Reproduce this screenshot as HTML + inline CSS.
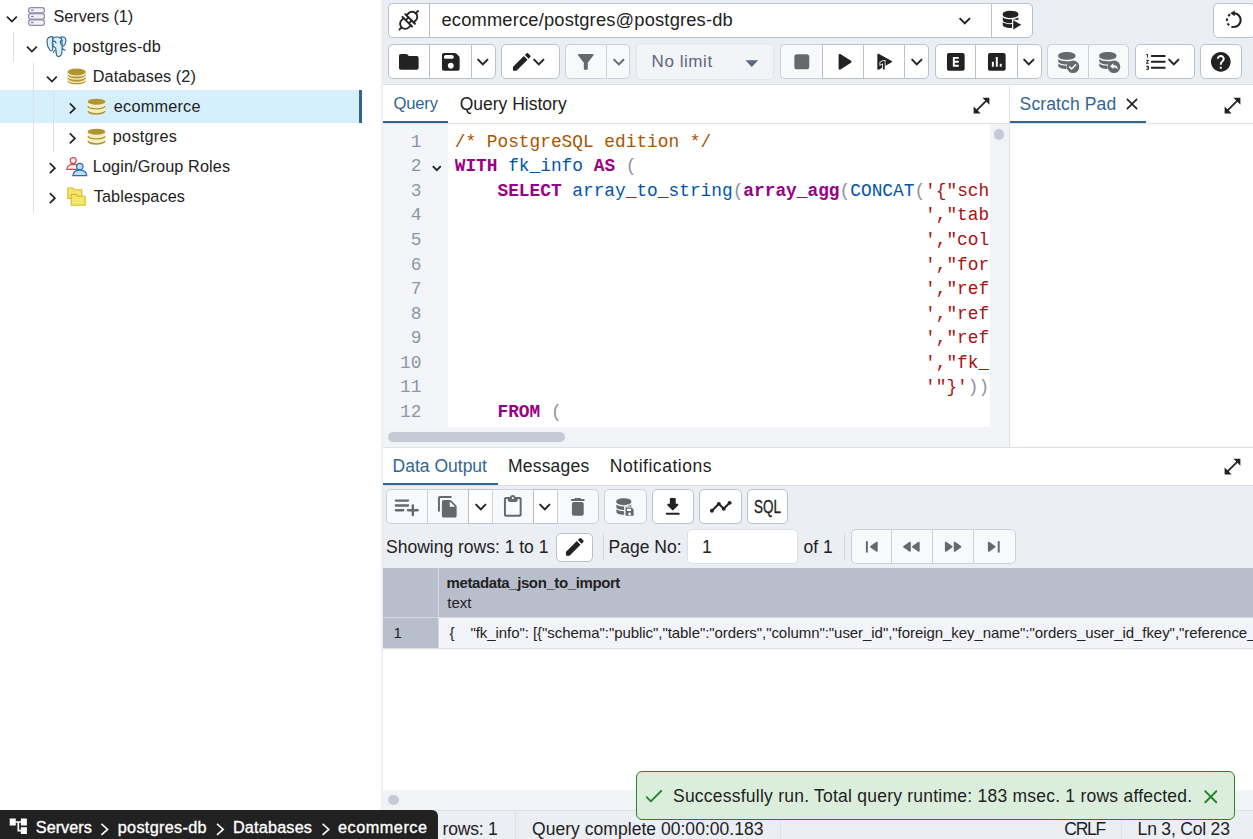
<!DOCTYPE html>
<html lang="en">
<head>
<meta charset="utf-8">
<title>pgAdmin 4</title>
<style>
*{box-sizing:border-box;margin:0;padding:0}
html,body{width:1253px;height:839px;overflow:hidden;background:#fff}
body{position:relative;font-family:"Liberation Sans",sans-serif;font-size:16.25px;color:#222;line-height:20px}
.abs{position:absolute}
.t{position:absolute;white-space:nowrap;line-height:20px;height:20px}
svg{position:absolute;display:block;overflow:visible}
/* tree */
#tree{position:absolute;left:0;top:0;width:382px;height:839px;background:#fff}
#sel{position:absolute;left:0;top:90px;width:362px;height:33px;background:#d6effc;border-right:3px solid #326690}
.guide{position:absolute;width:1px;background:#dde0e6}
.chev{stroke:#222;stroke-width:1.7;fill:none}
/* panels */
#split{position:absolute;left:380px;top:0;width:3px;height:839px;background:linear-gradient(to right,#fff,#e6e9ef)}
#tb{position:absolute;left:383px;top:0;width:870px;height:85px;background:#ebeef3;border-bottom:1px solid #dde0e6}
.b{position:absolute;height:35px;background:#fff;border:1px solid #bac1cd;top:44px}
.b.r1{top:3px}
.b svg{fill:#222;width:23.6px;height:23.6px;top:5.2px}
.b.dis{opacity:.65}
.gl{border-radius:5px 0 0 5px;border-right:none}
.gm{border-radius:0;border-right:none}
.gr{border-radius:0 5px 5px 0}
.gs{border-radius:5px}
.tabbar{position:absolute;height:39px;background:#fff;border-bottom:1px solid #dde0e6}
.tab{position:absolute;top:0;height:39px;border-bottom:3px solid transparent}
.tab.act{border-bottom-color:#326690;color:#326690}

.tabbar .ul{position:absolute;bottom:0;height:2px;background:#326690}
.tt{font-size:17.5px}
.tt.act{color:#326690}
svg.ico{fill:#222}
#ed{position:absolute;left:383px;top:124px;width:626px;height:323px;background:#fff;overflow:hidden}
#gut{position:absolute;left:0;top:0;width:65px;height:303px;background:#f3f5f9}
#ln,#code{position:absolute;top:5.700px;font-family:"Liberation Mono",monospace;font-size:17.82px;line-height:24.56px;white-space:pre;margin:0}
#ln{left:0;width:38.500px;text-align:right;color:#8d95a8}
#code{left:71.700px;width:534.800px;height:298px;overflow:hidden;color:#222}
#code b{color:#908;font-weight:bold}
#code i{color:#05a;font-style:normal}
#code u{color:#8d929d;text-decoration:none}
#code s{color:#a11;text-decoration:none}
#code .c{color:#a50}
#vsb{position:absolute;left:606.700px;top:0;width:19.300px;height:303px;background:#f1f3f7}
#hsb{position:absolute;left:0;top:303px;width:626px;height:20px;background:#f1f3f7}
.dot{position:absolute;width:10.500px;height:10.500px;border-radius:50%;background:#c5cad6}
.thumb{position:absolute;height:10px;border-radius:5px;background:#c5cad6}
#rtb{position:absolute;left:383px;top:486px;width:870px;height:82px;background:#ebeef3}
#rtb .b{top:4px}
#grid{position:absolute;left:383px;top:567.500px;width:870px;height:90px;overflow:hidden}
#status{position:absolute;left:383px;top:810px;width:870px;height:29px;background:#ebeef3;border-top:1px solid #dde0e6}
#crumb{position:absolute;left:0;top:810px;width:437.700px;height:29px;background:#212121;border-radius:0 6px 0 0;color:#fff}
.cb{top:6.600px;font-size:16.250px;color:#fff;-webkit-text-stroke:.35px #fff}
#toast{position:absolute;left:636px;top:771px;width:599px;height:48.500px;background:#dbeedb;border:1px solid #26852b;border-radius:6px}
</style>
</head>
<body>
<!-- ================= TREE ================= -->
<div id="tree">
  <div id="sel"></div>
  <div class="guide" style="left:13px;top:32px;height:30px"></div>
  <div class="guide" style="left:33px;top:62px;height:150px"></div>
  <div class="guide" style="left:53px;top:92px;height:60px"></div>
  <!-- chevrons -->
  <svg style="left:0;top:0" width="382" height="220" viewBox="0 0 382 220">
    <g class="chev">
      <path d="M7 16.6 L11.9 21.5 L16.8 16.6"/>
      <path d="M27 46.7 L31.9 51.6 L36.8 46.7"/>
      <path d="M47 76.7 L51.9 81.6 L56.8 76.7"/>
      <path d="M69.8 103.4 L74.9 108.4 L69.8 113.4"/>
      <path d="M69.8 133.4 L74.9 138.4 L69.8 143.4"/>
      <path d="M49.8 163.2 L54.9 168.2 L49.8 173.2"/>
      <path d="M49.8 193.2 L54.9 198.2 L49.8 203.2"/>
    </g>
    <!-- servers icon -->
    <g fill="#f1f1f6" stroke="#918eae" stroke-width="1.250">
      <rect x="28.6" y="7.5" width="15.8" height="5.4" rx="2.2"/>
      <rect x="28.6" y="13.7" width="15.8" height="5.4" rx="2.2"/>
      <rect x="28.6" y="19.9" width="15.8" height="5.4" rx="2.2"/>
    </g>
    <g stroke="#6f6c8e" stroke-width="1"><path d="M31 10.2h2.6M31 16.4h2.6M31 22.6h2.6"/></g>
    <!-- elephant -->
    <g transform="translate(42,32)" fill="#ddf0fb" stroke="#2d6594" stroke-width="1.150" stroke-linejoin="round" stroke-linecap="round">
      <path d="M11 5C8.500 4 5.300 5.500 5 8.700c-.1 3.300 1.300 7.300 2.700 9.300 1 1.300 2.600 1 3.100-.7-.6-4.300-.6-8.300.2-12.300z"/>
      <path d="M18.500 5.300c2.500-1.300 5.500.2 5.400 3.200-.2 3-1.400 5-2.900 5.800-1.500.2-2.700-1.300-2.700-3.300z"/>
      <path d="M11.200 6c1.800-1.400 6.300-1.400 8.100.5.900 1.500.9 3.500.7 5.500.3 3.300.2 6.700-.3 9.700-.3 1.200-.9 2-1.700 2.300-.7.600-1.500.6-2 .5-1.100-.4-1.600-1.400-1.700-2.500-.2-1.300-.2-2.700-.3-4-.1-.9-.3-1.700-.7-2.300-1.300-.5-2-1.400-2.300-2.400-.4-2-.4-5 .200-7.300z"/>
      <path d="M20.300 8.300c-1-.4-1.900.5-2 2 .0 1.500.7 2.500 1.700 2.700M11.200 9.300c1.300-.3 2.500.3 2.900 1.700M13.200 18l-1.800 2.400M20.500 16.700l2.300 1.600" fill="none"/>
    </g>
    <!-- db icons -->
    <g transform="translate(67.700,68.600)">
      <path d="M0 3v9.700a8.900 3 0 0 0 17.800 0V3z" fill="#b29431"/>
      <ellipse cx="8.900" cy="3" rx="8.900" ry="3" fill="#b29431"/>
      <g fill="none" stroke="#f6efc6" stroke-width="1.300"><path d="M.2 4.300a8.700 3 0 0 0 17.400 0"/><path d="M.2 7.500a8.700 3 0 0 0 17.400 0"/><path d="M.2 10.700a8.700 3 0 0 0 17.400 0"/></g>
    </g>
    <g transform="translate(87.700,98.700)">
      <path d="M0 3v9.700a8.800 3 0 0 0 17.600 0V3z" fill="#f6efc6"/>
      <g fill="none" stroke="#b29431"><path d="M.5 12.300a8.300 2.900 0 0 0 16.600 0" stroke-width="1.500"/><path d="M.3 7.300a8.500 2.900 0 0 0 17 0" stroke-width="1.100"/></g>
      <ellipse cx="8.800" cy="3" rx="8.800" ry="3" fill="#b29431"/>
    </g>
    <g transform="translate(87.700,128.700)">
      <path d="M0 3v9.700a8.800 3 0 0 0 17.600 0V3z" fill="#f6efc6"/>
      <g fill="none" stroke="#b29431"><path d="M.5 12.300a8.300 2.900 0 0 0 16.600 0" stroke-width="1.500"/><path d="M.3 7.300a8.500 2.900 0 0 0 17 0" stroke-width="1.100"/></g>
      <ellipse cx="8.800" cy="3" rx="8.800" ry="3" fill="#b29431"/>
    </g>
    
    <!-- roles -->
    <g stroke-width="1.200" stroke-linejoin="round">
      <g fill="#fdecec" stroke="#cc4d55"><circle cx="73.200" cy="160.600" r="3"/><path d="M66.800 169.400c.4-3.400 3-5 6.400-5s6 1.600 6.400 5z"/></g>
      <g fill="#bcdef3" stroke="#2d69c2"><circle cx="79.800" cy="166.600" r="3.200"/><path d="M72.800 175.600c.4-3.600 3.200-5.400 7-5.400s6.600 1.800 7 5.400z"/></g>
    </g>
    <!-- tablespaces -->
    <g fill="#f4e66a" stroke="#d9b928" stroke-width="1.100" stroke-linejoin="round">
      <path d="M67.800 188h4.600q1.400 0 1.600 1.800h7.800v8.600H67.800z"/>
      <path d="M71.200 194.400h4.400q1.400 0 1.600 1.800h8v9H71.200z"/>
    </g>
  </svg>
  <div class="t" style="left:53.6px;top:6px;letter-spacing:-0.080px">Servers (1)</div>
  <div class="t" style="left:72.8px;top:36px;letter-spacing:0.220px">postgres-db</div>
  <div class="t" style="left:92.8px;top:66px;letter-spacing:0.083px">Databases (2)</div>
  <div class="t" style="left:113.8px;top:96px;letter-spacing:0.225px">ecommerce</div>
  <div class="t" style="left:112.8px;top:126px;letter-spacing:0.257px">postgres</div>
  <div class="t" style="left:92.8px;top:156px;letter-spacing:0.113px">Login/Group Roles</div>
  <div class="t" style="left:93.8px;top:186px;letter-spacing:0.080px">Tablespaces</div>
  <!--TREE-ROWS-END-->
</div>
<div id="split"></div>
<!-- ================= TOOLBAR ================= -->
<div id="tb">
<!--TOOLBAR-->
<div class="b gl" style="left:5.0px;top:3.0px;width:41.0px;height:35.0px"><svg viewBox="0 0 24 24" style="left:7.7px"><g transform="translate(11.900,11.500) rotate(-45)" fill="none" stroke="#222" stroke-width="1.900" stroke-linecap="round"><path d="M-2-7V7M2-7V7"/><path d="M-2-5.200H-5A5.200 5.200 0 0 0-5 5.200H-2M2-5.200H5A5.200 5.200 0 0 1 5 5.200H2"/><path d="M-10.200 0H-13.400M10.200 0H13.400M-2-2.300H2M-2 2.300H2"/></g></svg></div>
<div class="b gm" style="left:46.0px;top:3px;width:562.0px;height:35px"><div class="t" style="left:11.5px;top:5.6px;font-size:18.3px;letter-spacing:0.188px">ecommerce/postgres@postgres-db</div><svg viewBox="0 0 24 24" style="left:523.3px"><path d="M7.41 8.59L12 13.17l4.59-4.58L18 10l-6 6-6-6 1.410-1.410z"/></svg></div>
<div class="b gr" style="left:608.0px;top:3.0px;width:42.0px;height:35.0px"><svg viewBox="0 0 24 24" style="left:7.8px"><g transform="translate(12,10.900) scale(.92) translate(-12,-12)"><path d="M2 5.300C2 3.500 5.900 2 10.600 2s8.600 1.500 8.600 3.300v1.400c0 1.800-3.900 3.300-8.600 3.300S2 8.500 2 6.700z"/><path d="M2 9.200c1.500 1.500 4.900 2.300 8.600 2.300s7.100-.8 8.600-2.300v3.200l-7-1v4.300c-.5.050-1 .07-1.600.07C5.900 15.770 2 14.300 2 12.500zM2 14.600c1.500 1.500 4.900 2.300 8.600 2.300.6 0 1.100 0 1.600-.07v4.300c-.5.050-1 .07-1.600.07C5.900 21.200 2 19.700 2 17.900z"/><path d="M13.600 12.700l9 5-9 5z"/></g></svg></div>
<div class="b gs" style="left:830.0px;top:3.0px;width:42.0px;height:35.0px"><svg viewBox="0 0 24 24" style="left:7.9px"><g fill="none" stroke="#222" stroke-width="2.100"><path d="M12 4.400a7 7 0 1 1 0 14"/><path d="M12 18.400a7 7 0 0 1-7-7c0-3 1.900-5.600 4.600-6.600" stroke-dasharray="2.500 2.600"/></g><path d="M13 1.400v6L8.400 4.400z"/></svg></div>
<div class="b gl" style="left:5.0px;top:44.0px;width:41.0px;height:35.0px"><svg viewBox="0 0 24 24" style="left:7.7px"><path d="M10.59 4.59C10.21 4.21 9.7 4 9.17 4H4c-1.1 0-1.99.9-1.99 2L2 18c0 1.1.9 2 2 2h16c1.1 0 2-.9 2-2V8c0-1.1-.9-2-2-2h-8l-1.41-1.41z"/></svg></div>
<div class="b gm" style="left:46.0px;top:44.0px;width:42.0px;height:35.0px"><svg viewBox="0 0 24 24" style="left:8.6px"><path d="M17.59 3.59c-.38-.38-.89-.59-1.42-.59H5c-1.11 0-2 .9-2 2v14c0 1.1.9 2 2 2h14c1.1 0 2-.9 2-2V7.830c0-.53-.21-1.040-.59-1.410l-2.820-2.830zM12 19c-1.660 0-3-1.340-3-3s1.340-3 3-3 3 1.340 3 3-1.340 3-3 3zm1-10H7c-1.100 0-2-.9-2-2s.9-2 2-2h6c1.100 0 2 .9 2 2s-.9 2-2 2z"/></svg></div>
<div class="b gr" style="left:88.0px;top:44.0px;width:25.0px;height:35.0px"><svg viewBox="0 0 24 24" style="left:-1.3px"><path d="M7.41 8.59L12 13.17l4.59-4.58L18 10l-6 6-6-6 1.410-1.410z"/></svg></div>
<div class="b gs" style="left:118.0px;top:44.0px;width:59.0px;height:35.0px"><svg viewBox="0 0 24 24" style="left:7.9px"><path d="M3 17.460v3.040c0 .28.22.5.5.5h3.040c.13 0 .26-.05.35-.15L17.810 9.940l-3.750-3.750L3.150 17.100c-.1.1-.15.22-.15.360zM20.710 7.040c.39-.39.39-1.020 0-1.410l-2.340-2.340c-.39-.39-1.020-.39-1.410 0l-1.830 1.830 3.750 3.750 1.830-1.830z"/></svg><svg viewBox="0 0 24 24" style="left:25.0px"><path d="M7.41 8.59L12 13.17l4.59-4.58L18 10l-6 6-6-6 1.410-1.410z"/></svg></div>
<div class="b gl dis" style="left:182.0px;top:44.0px;width:41.0px;height:35.0px"><svg viewBox="0 0 24 24" style="left:7.9px"><path d="M4.250 5.610C6.270 8.200 10 13 10 13v6c0 .55.45 1 1 1h2c.55 0 1-.45 1-1v-6s3.720-4.800 5.740-7.390c.51-.66.04-1.610-.79-1.610H5.040c-.83 0-1.300.95-.79 1.610z"/></svg></div>
<div class="b gr dis" style="left:223.0px;top:44.0px;width:24.0px;height:35.0px"><svg viewBox="0 0 24 24" style="left:-0.5px"><path d="M7.41 8.59L12 13.17l4.59-4.58L18 10l-6 6-6-6 1.410-1.410z"/></svg></div>
<div class="b gs" style="left:253.0px;top:43px;width:138.0px;height:37px;background:#f3f4f8;border-color:#e1e4eb"><div class="t" style="left:14.6px;top:8px;font-size:17px;color:#5d6682;letter-spacing:0.550px">No limit</div><svg viewBox="0 0 24 24" style="left:103.1px;top:6.700px;fill:#5d6682"><path d="M5.500 9.300l6.500 7 6.500-7z"/></svg></div>
<div class="b gl dis" style="left:397.0px;top:44.0px;width:42.0px;height:35.0px"><svg viewBox="0 0 24 24" style="left:8.8px"><rect x="4.400" y="4.400" width="15.200" height="15.200" rx="2.600"/></svg></div>
<div class="b gm" style="left:439.0px;top:44.0px;width:41.0px;height:35.0px"><svg viewBox="0 0 24 24" style="left:9.6px"><path d="M5.700 5.100v13.800c0 .9 1 1.450 1.760.96l10.840-6.900c.7-.45.7-1.470 0-1.920L7.460 4.140C6.700 3.650 5.700 4.200 5.700 5.100z"/></svg></div>
<div class="b gm" style="left:480.0px;top:44.0px;width:41.0px;height:35.0px"><svg viewBox="0 0 24 24" style="left:9.7px"><path d="M3.400 4.600V19.300c0 .7.7 1.100 1.300.7L18 12.500c.5-.3.5-1 0-1.300L4.700 3.900c-.6-.4-1.300 0-1.300.7z"/><path d="M10.900 11V19.900H9.100V13.600L6.400 14.900V12.700L9.500 11z" fill="#222" stroke="#fff" stroke-width="1.600" paint-order="stroke"/></svg></div>
<div class="b gr" style="left:521.0px;top:44.0px;width:25.0px;height:35.0px"><svg viewBox="0 0 24 24" style="left:-0.2px"><path d="M7.41 8.59L12 13.17l4.59-4.58L18 10l-6 6-6-6 1.410-1.410z"/></svg></div>
<div class="b gl" style="left:552.0px;top:44.0px;width:40.0px;height:35.0px"><svg viewBox="0 0 24 24" style="left:7.6px"><path d="M19 3H5c-1.100 0-2 .9-2 2v14c0 1.100.9 2 2 2h14c1.100 0 2-.9 2-2V5c0-1.100-.9-2-2-2zm-4 6h-4v2h4v2h-4v2h4v2H9V7h6v2z"/></svg></div>
<div class="b gm" style="left:592.0px;top:44.0px;width:42.0px;height:35.0px"><svg viewBox="0 0 24 24" style="left:8.7px"><path d="M19 3H5c-1.100 0-2 .9-2 2v14c0 1.100.9 2 2 2h14c1.100 0 2-.9 2-2V5c0-1.100-.9-2-2-2zM9 17H7v-5h2v5zm4 0h-2V7h2v10zm4 0h-2v-3h2v3z"/></svg></div>
<div class="b gr" style="left:634.0px;top:44.0px;width:25.0px;height:35.0px"><svg viewBox="0 0 24 24" style="left:-1.3px"><path d="M7.41 8.59L12 13.17l4.59-4.58L18 10l-6 6-6-6 1.410-1.410z"/></svg></div>
<div class="b gl dis" style="left:664.0px;top:44.0px;width:41.0px;height:35.0px"><svg viewBox="0 0 24 24" style="left:8.1px"><path d="M2.300 5.300C2.300 3.500 6.200 2 11 2s8.700 1.500 8.700 3.300v1.400C19.700 8.500 15.800 10 11 10S2.300 8.500 2.300 6.700z"/><path d="M2.300 9.200c1.500 1.500 4.900 2.300 8.700 2.300 1.300 0 2.600-.1 3.700-.3-1.400.8-2.500 2-3.100 3.500H11c-4.800 0-8.700-1.500-8.700-3.300zM2.300 13.700c1.500 1.500 4.900 2.300 8.500 2.300-.2.900-.2 2.100 0 3.200-4.700-.05-8.500-1.500-8.500-3.300z"/><path d="M17.300 10.600a6.400 6.400 0 1 0 0 12.800 6.400 6.400 0 0 0 0-12.800zm-1.400 9.700l-3-3 1.100-1.100 1.900 1.900 4-4 1.100 1.100z"/></svg></div>
<div class="b gr dis" style="left:705.0px;top:44.0px;width:41.0px;height:35.0px"><svg viewBox="0 0 24 24" style="left:8.1px"><path d="M2.300 5.300C2.300 3.500 6.200 2 11 2s8.700 1.500 8.700 3.300v1.400C19.700 8.500 15.800 10 11 10S2.300 8.500 2.300 6.700z"/><path d="M2.300 9.200c1.500 1.500 4.900 2.300 8.700 2.300 1.300 0 2.600-.1 3.700-.3-1.400.8-2.500 2-3.100 3.500H11c-4.800 0-8.700-1.500-8.700-3.300zM2.300 13.700c1.500 1.500 4.900 2.300 8.500 2.300-.2.900-.2 2.100 0 3.200-4.700-.05-8.500-1.500-8.500-3.300z"/><path d="M17.300 10.600a6.400 6.400 0 1 0 0 12.800 6.400 6.400 0 0 0 0-12.800zm-.7 3v1.700c2.900 0 4.700 1.700 4.700 4.700-.8-1.600-2.300-2.300-4.700-2.300v1.700l-3.400-2.900z"/></svg></div>
<div class="b gs" style="left:752.0px;top:44.0px;width:60.0px;height:35.0px"><svg viewBox="0 0 24 24" style="left:7.5px"><path d="M8 7h13c.55 0 1-.45 1-1s-.45-1-1-1H8c-.55 0-1 .45-1 1s.45 1 1 1zm13 10H8c-.55 0-1 .45-1 1s.45 1 1 1h13c.55 0 1-.45 1-1s-.45-1-1-1zm0-6H8c-.55 0-1 .45-1 1s.45 1 1 1h13c.55 0 1-.45 1-1s-.45-1-1-1zM4.500 16h-2c-.28 0-.5.22-.5.5s.22.5.5.500H4v.5h-.5c-.28 0-.5.22-.5.5s.22.5.5.500H4v.5H2.500c-.28 0-.5.22-.5.5s.22.5.5.500h2c.28 0 .5-.22.5-.5v-3c0-.28-.22-.5-.5-.5zm-2-11H3v2.500c0 .28.22.5.5.500s.5-.22.5-.5v-3c0-.28-.22-.5-.5-.5h-1c-.28 0-.5.22-.5.5s.22.5.5.500zm2 5h-2c-.28 0-.5.22-.5.5s.22.5.5.500h1.300l-1.680 1.960c-.08.09-.12.21-.12.320v.22c0 .28.22.5.5.500h2c.28 0 .5-.22.5-.5s-.22-.5-.5-.5H3.200l1.680-1.960c.08-.09.12-.21.12-.320v-.22c0-.28-.22-.5-.5-.5z"/></svg><svg viewBox="0 0 24 24" style="left:26.1px"><path d="M7.41 8.59L12 13.17l4.59-4.58L18 10l-6 6-6-6 1.410-1.410z"/></svg></div>
<div class="b gs" style="left:817.0px;top:44.0px;width:42.0px;height:35.0px"><svg viewBox="0 0 24 24" style="left:7.7px"><path d="M12 2C6.480 2 2 6.480 2 12s4.480 10 10 10 10-4.480 10-10S17.520 2 12 2zm1 17h-2v-2h2v2zm2.070-7.750l-.9.92C13.450 12.900 13 13.500 13 15h-2v-.5c0-1.100.45-2.100 1.170-2.830l1.240-1.260c.37-.36.59-.86.59-1.410 0-1.100-.9-2-2-2s-2 .9-2 2H8c0-2.210 1.790-4 4-4s4 1.790 4 4c0 .88-.36 1.680-.93 2.250z"/></svg></div>
<!--TOOLBAR-END-->
</div>
<!--MAIN-->
<!-- ================= QUERY / SCRATCH TAB BARS ================= -->
<div class="tabbar" style="left:383px;top:86px;width:626px;height:38px">
  <div class="ul" style="left:0;width:65.400px"></div>
  <div class="t tt act" style="left:10.400px;top:8px;font-size:16.600px;letter-spacing:-0.150px">Query</div>
  <div class="t tt" style="left:76.700px;top:8px">Query History</div>
  <svg class="ico" viewBox="0 0 24 24" style="left:588.2px;top:8.5px;width:21px;height:21px"><path d="M21 11V3h-8l3.290 3.290-10 10L3 13v8h8l-3.290-3.290 10-10z"/></svg>
</div>
<div class="tabbar" style="left:1010px;top:86px;width:243px;height:38px">
  <div class="ul" style="left:0;width:136px"></div>
  <div class="t tt act" style="left:9.6px;top:8px;letter-spacing:0.120px">Scratch Pad</div>
  <svg class="ico" viewBox="0 0 24 24" style="left:112.1px;top:7.8px;width:20px;height:20px"><path d="M18.300 5.710c-.39-.39-1.020-.39-1.410 0L12 10.590 7.110 5.700c-.39-.39-1.020-.39-1.410 0-.39.39-.39 1.020 0 1.410L10.590 12 5.700 16.890c-.39.39-.39 1.020 0 1.410.39.39 1.020.39 1.410 0L12 13.410l4.890 4.890c.39.39 1.020.39 1.410 0 .39-.39.39-1.020 0-1.410L13.410 12l4.890-4.890c.38-.38.38-1.020 0-1.400z"/></svg>
  <svg class="ico" viewBox="0 0 24 24" style="left:212.2px;top:8.5px;width:21px;height:21px"><path d="M21 11V3h-8l3.290 3.290-10 10L3 13v8h8l-3.290-3.290 10-10z"/></svg>
</div>
<div class="abs" style="left:1009px;top:86px;width:1px;height:362px;background:#dde0e6"></div>
<!-- ================= EDITOR ================= -->
<div id="ed">
  <div id="gut"></div>
  <pre id="ln">1
2
3
4
5
6
7
8
9
10
11
12</pre>
  <svg style="left:47.500px;top:39.500px" width="12" height="10" viewBox="0 0 12 10"><path d="M1.800 2.200L5.800 6.200L9.800 2.200" fill="none" stroke="#222" stroke-width="1.900"/></svg>
  <pre id="code"><span class="c">/* PostgreSQL edition */</span>
<b>WITH</b> <i>fk_info</i> <b>AS</b> <u>(</u>
    <b>SELECT</b> <i>array_to_string</i><u>(</u><b>array_agg</b><u>(</u><i>CONCAT</i><u>(</u><s>'{"schema":"',</s>
                                            <s>',"table":"',</s>
                                            <s>',"column":"',</s>
                                            <s>',"foreign_key_name":"',</s>
                                            <s>',"reference_schema":"',</s>
                                            <s>',"reference_table":"',</s>
                                            <s>',"reference_column":"',</s>
                                            <s>',"fk_def":"',</s>
                                            <s>'"}'</s><u>))</u>
    <b>FROM</b> <u>(</u></pre>
  <div id="vsb"><div class="dot" style="left:4.300px;top:5px"></div></div>
  <div id="hsb"><div class="thumb" style="left:5.200px;top:5px;width:176.500px"></div></div>
</div>
<div class="abs" style="left:383px;top:447px;width:870px;height:1px;background:#dde0e6"></div>
<!-- ================= OUTPUT ================= -->
<div class="tabbar" style="left:383px;top:448px;width:870px;height:38px">
  <div class="ul" style="left:0;width:114.500px"></div>
  <div class="t tt act" style="left:9.6px;top:7.500px;letter-spacing:0.000px">Data Output</div>
  <div class="t tt" style="left:125.0px;top:7.500px;letter-spacing:0.200px">Messages</div>
  <div class="t tt" style="left:226.8px;top:7.500px;letter-spacing:0.533px">Notifications</div>
  <svg class="ico" viewBox="0 0 24 24" style="left:839.4px;top:8.4px;width:21px;height:21px"><path d="M21 11V3h-8l3.290 3.290-10 10L3 13v8h8l-3.290-3.290 10-10z"/></svg>
</div>
<div id="rtb">
<!--RTB-->
<div class="b gl dis" style="left:3.0px;top:3.0px;width:41.0px;height:35.0px"><svg viewBox="0 0 24 24" style="left:7.5px;top:4.7px"><g transform="translate(12,13.1) scale(1.23) translate(-12,-13)"><path d="M13 10H3c-.55 0-1 .45-1 1s.45 1 1 1h10c.55 0 1-.45 1-1s-.45-1-1-1zm0-4H3c-.55 0-1 .45-1 1s.45 1 1 1h10c.55 0 1-.45 1-1s-.45-1-1-1zm5 8v-3c0-.55-.45-1-1-1s-1 .45-1 1v3h-3c-.55 0-1 .45-1 1s.45 1 1 1h3v3c0 .55.45 1 1 1s1-.45 1-1v-3h3c.55 0 1-.45 1-1s-.45-1-1-1h-3zM3 16h6c.55 0 1-.45 1-1s-.45-1-1-1H3c-.55 0-1 .45-1 1s.45 1 1 1z"/></g></svg></div>
<div class="b gm dis" style="left:44.0px;top:3.0px;width:41.0px;height:35.0px"><svg viewBox="0 0 24 24" style="left:8.4px;top:4.7px"><path d="M15 1H4c-1.100 0-2 .9-2 2v13c0 .55.45 1 1 1s1-.45 1-1V4c0-.55.45-1 1-1h10c.55 0 1-.45 1-1s-.45-1-1-1zm.59 4.590l4.830 4.830c.37.37.58.88.58 1.410V21c0 1.100-.9 2-2 2H7.990C6.890 23 6 22.100 6 21l.01-14c0-1.100.89-2 1.990-2h6.170c.53 0 1.040.21 1.420.59zM15 12h4.500L14 6.500V11c0 .55.45 1 1 1z"/></svg></div>
<div class="b gm" style="left:85.0px;top:3.0px;width:24.0px;height:35.0px"><svg viewBox="0 0 24 24" style="left:-0.2px;top:4.7px"><path d="M7.41 8.59L12 13.17l4.59-4.58L18 10l-6 6-6-6 1.410-1.410z"/></svg></div>
<div class="b gm dis" style="left:109.0px;top:3.0px;width:41.0px;height:35.0px"><svg viewBox="0 0 24 24" style="left:7.8px;top:4.7px"><path d="M19 2h-4.180C14.400.84 13.300 0 12 0S9.600.84 9.180 2H5c-1.100 0-2 .9-2 2v16c0 1.100.9 2 2 2h14c1.100 0 2-.9 2-2V4c0-1.100-.9-2-2-2zm-7 0c.55 0 1 .45 1 1s-.45 1-1 1-1-.45-1-1 .45-1 1-1zm6 18H6c-.55 0-1-.45-1-1V5c0-.55.45-1 1-1h1v1c0 1.100.9 2 2 2h6c1.100 0 2-.9 2-2V4h1c.55 0 1 .45 1 1v14c0 .55-.45 1-1 1z"/></svg></div>
<div class="b gm" style="left:150.0px;top:3.0px;width:24.0px;height:35.0px"><svg viewBox="0 0 24 24" style="left:-0.8px;top:4.7px"><path d="M7.41 8.59L12 13.17l4.59-4.58L18 10l-6 6-6-6 1.410-1.410z"/></svg></div>
<div class="b gr dis" style="left:174.0px;top:3.0px;width:42.0px;height:35.0px"><svg viewBox="0 0 24 24" style="left:7.9px;top:4.7px"><path d="M6 19c0 1.100.9 2 2 2h8c1.100 0 2-.9 2-2V9c0-1.100-.9-2-2-2H8c-1.100 0-2 .9-2 2v10zM18 4h-2.500l-.71-.71c-.18-.18-.44-.29-.7-.29H9.910c-.26 0-.52.11-.7.29L8.500 4H6c-.55 0-1 .45-1 1s.45 1 1 1h12c.55 0 1-.45 1-1s-.45-1-1-1z"/></svg></div>
<div class="b gs dis" style="left:221.0px;top:3.0px;width:43.0px;height:35.0px"><svg viewBox="0 0 24 24" style="left:8.4px;top:4.7px"><g transform="translate(12.200,12.300) scale(.87) translate(-12.400,-12.250)"><path d="M2.300 5.300C2.300 3.500 6.200 2 11 2s8.700 1.500 8.700 3.300v1.400C19.700 8.500 15.800 10 11 10S2.300 8.500 2.300 6.700z"/><path d="M2.300 9.200c1.500 1.500 4.900 2.300 8.700 2.300s7.200-.8 8.700-2.300v2.300h-8.300v4.100H11c-4.800 0-8.700-1.500-8.700-3.300zM2.300 14.700c1.500 1.500 4.900 2.300 8.700 2.300h.4v4.200H11c-4.800 0-8.700-1.500-8.700-3.300z"/><path d="M13 12.800h7.200l2.300 2.300v7.400H13zm1.800 1.300v2.600h4.600v-2.600zm3 4.600a1.600 1.600 0 1 0 0 3.200 1.600 1.600 0 0 0 0-3.200z"/></g></svg></div>
<div class="b gs" style="left:269.0px;top:3.0px;width:42.0px;height:35.0px"><svg viewBox="0 0 24 24" style="left:7.8px;top:4.7px"><path d="M16.590 9H15V4c0-.55-.45-1-1-1h-4c-.55 0-1 .45-1 1v5H7.410c-.89 0-1.340 1.080-.71 1.710l4.590 4.590c.39.39 1.020.39 1.410 0l4.590-4.590c.63-.63.19-1.710-.7-1.710zM5 19c0 .55.45 1 1 1h12c.55 0 1-.45 1-1s-.45-1-1-1H6c-.55 0-1 .45-1 1z"/></svg></div>
<div class="b gs" style="left:316.0px;top:3.0px;width:43.0px;height:35.0px"><svg viewBox="0 0 24 24" style="left:8.6px;top:4.7px"><path d="M23 8c0 1.100-.9 2-2 2-.18 0-.35-.02-.51-.07l-3.560 3.550c.05.16.07.34.07.52 0 1.100-.9 2-2 2s-2-.9-2-2c0-.18.02-.36.07-.52l-2.550-2.550c-.16.05-.34.07-.52.07s-.36-.02-.52-.07l-4.550 4.560c.05.16.07.33.07.51 0 1.100-.9 2-2 2s-2-.9-2-2 .9-2 2-2c.18 0 .35.02.51.07l4.560-4.550C8.020 9.360 8 9.180 8 9c0-1.100.9-2 2-2s2 .9 2 2c0 .18-.02.36-.07.52l2.550 2.550c.16-.05.34-.07.52-.07s.36.02.52.07l3.550-3.560C19.020 8.350 19 8.180 19 8c0-1.100.9-2 2-2s2 .9 2 2z"/></svg></div>
<div class="b gs" style="left:364.0px;top:3px;width:41.4px;height:35px"><div class="t" style="left:6px;top:7.300px;font-size:18px;-webkit-text-stroke:.35px #222;transform:scaleX(.75);transform-origin:0 0">SQL</div></div>
<div class="t tt" style="left:3px;top:50.800px">Showing rows: 1 to 1</div>
<div class="b gs" style="left:173.0px;top:47.0px;width:37.0px;height:29.0px"><svg viewBox="0 0 24 24" style="left:6.0px;top:0.9px"><path d="M3 17.460v3.040c0 .28.22.5.5.5h3.040c.13 0 .26-.05.35-.15L17.810 9.940l-3.750-3.750L3.150 17.100c-.1.1-.15.22-.15.360zM20.710 7.040c.39-.39.39-1.020 0-1.410l-2.340-2.340c-.39-.39-1.020-.39-1.410 0l-1.830 1.830 3.750 3.750 1.830-1.830z"/></svg></div>
<div class="abs" style="left:220px;top:47px;width:1px;height:28px;background:#d3d7e0"></div>
<div class="t tt" style="left:225.6px;top:50.800px">Page No:</div>
<div class="abs" style="left:304px;top:43px;width:110.500px;height:35px;background:#fff;border:1px solid #dde0e6;border-radius:5px"><div class="t tt" style="left:14px;top:6.800px">1</div></div>
<div class="t tt" style="left:420.600px;top:50.800px">of 1</div>
<div class="abs" style="left:461px;top:47px;width:1px;height:28px;background:#d3d7e0"></div>
<div class="b gl dis" style="left:468.0px;top:43.0px;width:40.0px;height:35.0px"><svg viewBox="0 0 24 24" style="left:7.6px;top:4.7px"><path d="M7 6c.55 0 1 .45 1 1v10c0 .55-.45 1-1 1s-1-.45-1-1V7c0-.55.45-1 1-1zm3.660 6.820l5.770 4.070c.66.47 1.580-.01 1.580-.82V7.930c0-.81-.91-1.280-1.580-.82l-5.770 4.070c-.57.4-.57 1.240 0 1.640z"/></svg></div>
<div class="b gm dis" style="left:508.0px;top:43.0px;width:41.0px;height:35.0px"><svg viewBox="0 0 24 24" style="left:7.7px;top:4.7px"><path d="M11 16.070V7.930c0-.81-.91-1.280-1.580-.82l-5.770 4.070c-.56.4-.56 1.240 0 1.630l5.770 4.070c.67.47 1.580 0 1.580-.81zm1.660-3.250l5.770 4.070c.66.47 1.580-.01 1.580-.82V7.930c0-.81-.91-1.280-1.580-.82l-5.770 4.070c-.57.4-.57 1.240 0 1.640z"/></svg></div>
<div class="b gm dis" style="left:549.0px;top:43.0px;width:41.0px;height:35.0px"><svg viewBox="0 0 24 24" style="left:7.8px;top:4.7px"><g transform="translate(24,0) scale(-1,1)"><path d="M11 16.070V7.930c0-.81-.91-1.280-1.580-.82l-5.770 4.070c-.56.4-.56 1.240 0 1.630l5.770 4.070c.67.47 1.580 0 1.580-.81zm1.660-3.250l5.770 4.070c.66.47 1.580-.01 1.580-.82V7.930c0-.81-.91-1.280-1.580-.82l-5.770 4.070c-.57.4-.57 1.240 0 1.640z"/></g></svg></div>
<div class="b gr dis" style="left:590.0px;top:43.0px;width:43.0px;height:35.0px"><svg viewBox="0 0 24 24" style="left:7.8px;top:4.7px"><g transform="translate(24,0) scale(-1,1)"><path d="M7 6c.55 0 1 .45 1 1v10c0 .55-.45 1-1 1s-1-.45-1-1V7c0-.55.45-1 1-1zm3.660 6.820l5.770 4.070c.66.47 1.580-.01 1.580-.82V7.930c0-.81-.91-1.280-1.580-.82l-5.770 4.070c-.57.4-.57 1.240 0 1.640z"/></g></svg></div>
<!--RTB-END-->
</div>
<!-- grid -->
<div id="grid">
  <div class="abs" style="left:0;top:0;width:870px;height:49.500px;background:#b9becd"></div>
  <div class="abs" style="left:0;top:49.500px;width:55px;height:31px;background:#b9becd"></div>
  <div class="abs" style="left:55px;top:0;width:1px;height:81px;background:#d5d9e2"></div>
  <div class="abs" style="left:0;top:49px;width:870px;height:1px;background:#d5d9e2"></div>
  <div class="abs" style="left:56px;top:50px;width:814px;height:30.500px;background:#f3f4f9"></div>
  <div class="abs" style="left:0;top:80.500px;width:870px;height:1px;background:#dde0e6"></div>
  <div class="t" style="left:63.5px;top:5.600px;font-size:15px;font-weight:bold;letter-spacing:-0.395px">metadata_json_to_import</div>
  <div class="t" style="left:64.300px;top:25.500px;font-size:15px">text</div>
  <div class="t" style="left:10.500px;top:55.300px;font-size:15px">1</div>
  <div class="t" style="left:66.400px;top:55.300px;font-size:15px;width:804px;overflow:hidden"><span>{</span><span style="margin-left:16px;letter-spacing:-.055px">"fk_info": [{"schema":"public","table":"orders","column":"user_id","foreign_key_name":"orders_user_id_fkey","reference_schema":"public"</span></div>
</div>
<!-- grid scrollbar + status -->
<div class="abs" style="left:383px;top:790px;width:870px;height:20px;background:#f1f3f7"><div class="dot" style="left:5.300px;top:4.500px"></div></div>
<div id="status">
  <div class="t tt" style="left:59.6px;top:7.500px;letter-spacing:-0.217px">rows: 1</div>
  <div class="abs" style="left:131.500px;top:0;width:1px;height:29px;background:#dde0e6"></div>
  <div class="t tt" style="left:149.1px;top:7.500px;letter-spacing:0.031px">Query complete 00:00:00.183</div>
  <div class="abs" style="left:397px;top:0;width:1px;height:29px;background:#dde0e6"></div>
  <div class="t tt" style="left:681.2px;top:7.500px;letter-spacing:-1.200px">CRLF</div>
  <div class="abs" style="left:738px;top:0;width:1px;height:29px;background:#dde0e6"></div>
  <div class="t tt" style="left:754.6px;top:7.500px;letter-spacing:-0.191px">Ln 3, Col 23</div>
</div>
<!-- breadcrumb -->
<div id="crumb">
  <svg viewBox="0 0 24 24" style="left:7.900px;top:6.200px;width:20.600px;height:20.600px;fill:#fff"><path d="M22 11V3h-7v3H9V3H2v8h7V8h2v10h4v3h7v-8h-7v3h-2V8h2v3z"/></svg>
  <div class="t cb" style="left:35.800px">Servers</div>
  <div class="t cb" style="left:117.8px;letter-spacing:0.290px">postgres-db</div>
  <div class="t cb" style="left:232.9px;letter-spacing:0.175px">Databases</div>
  <div class="t cb" style="left:338.0px;letter-spacing:0.512px">ecommerce</div>
  <svg style="left:0;top:0" width="438" height="29" viewBox="0 0 438 29"><g fill="none" stroke="#fff" stroke-width="1.600"><path d="M101.400 13.900L107.600 19.400L101.400 24.900"/><path d="M217 13.900L223.200 19.400L217 24.900"/><path d="M322.600 13.900L328.800 19.400L322.600 24.900"/></g></svg>
</div>
<!-- toast -->
<div id="toast">
  <svg viewBox="0 0 24 24" style="left:5.400px;top:11.500px;width:23.600px;height:23.600px;fill:#26852b"><path d="M9 16.170L5.530 12.700c-.39-.39-1.020-.39-1.410 0-.39.39-.39 1.020 0 1.410l4.180 4.180c.39.39 1.020.39 1.410 0L20.290 7.710c.39-.39.39-1.020 0-1.410-.39-.39-1.020-.39-1.410 0L9 16.170z"/></svg>
  <div class="t tt" style="left:36.0px;top:13.500px;letter-spacing:0.233px">Successfully run. Total query runtime: 183 msec. 1 rows affected.</div>
  <svg viewBox="0 0 24 24" style="left:562px;top:12.500px;width:23.600px;height:23.600px;fill:#26852b"><path d="M18.300 5.710c-.39-.39-1.020-.39-1.410 0L12 10.590 7.110 5.700c-.39-.39-1.020-.39-1.410 0-.39.39-.39 1.020 0 1.410L10.590 12 5.700 16.890c-.39.39-.39 1.020 0 1.410.39.39 1.020.39 1.410 0L12 13.410l4.890 4.890c.39.39 1.020.39 1.410 0 .39-.39.39-1.020 0-1.410L13.410 12l4.890-4.890c.38-.38.38-1.020 0-1.400z"/></svg>
</div>
<!--MAIN-END-->
</body>
</html>
